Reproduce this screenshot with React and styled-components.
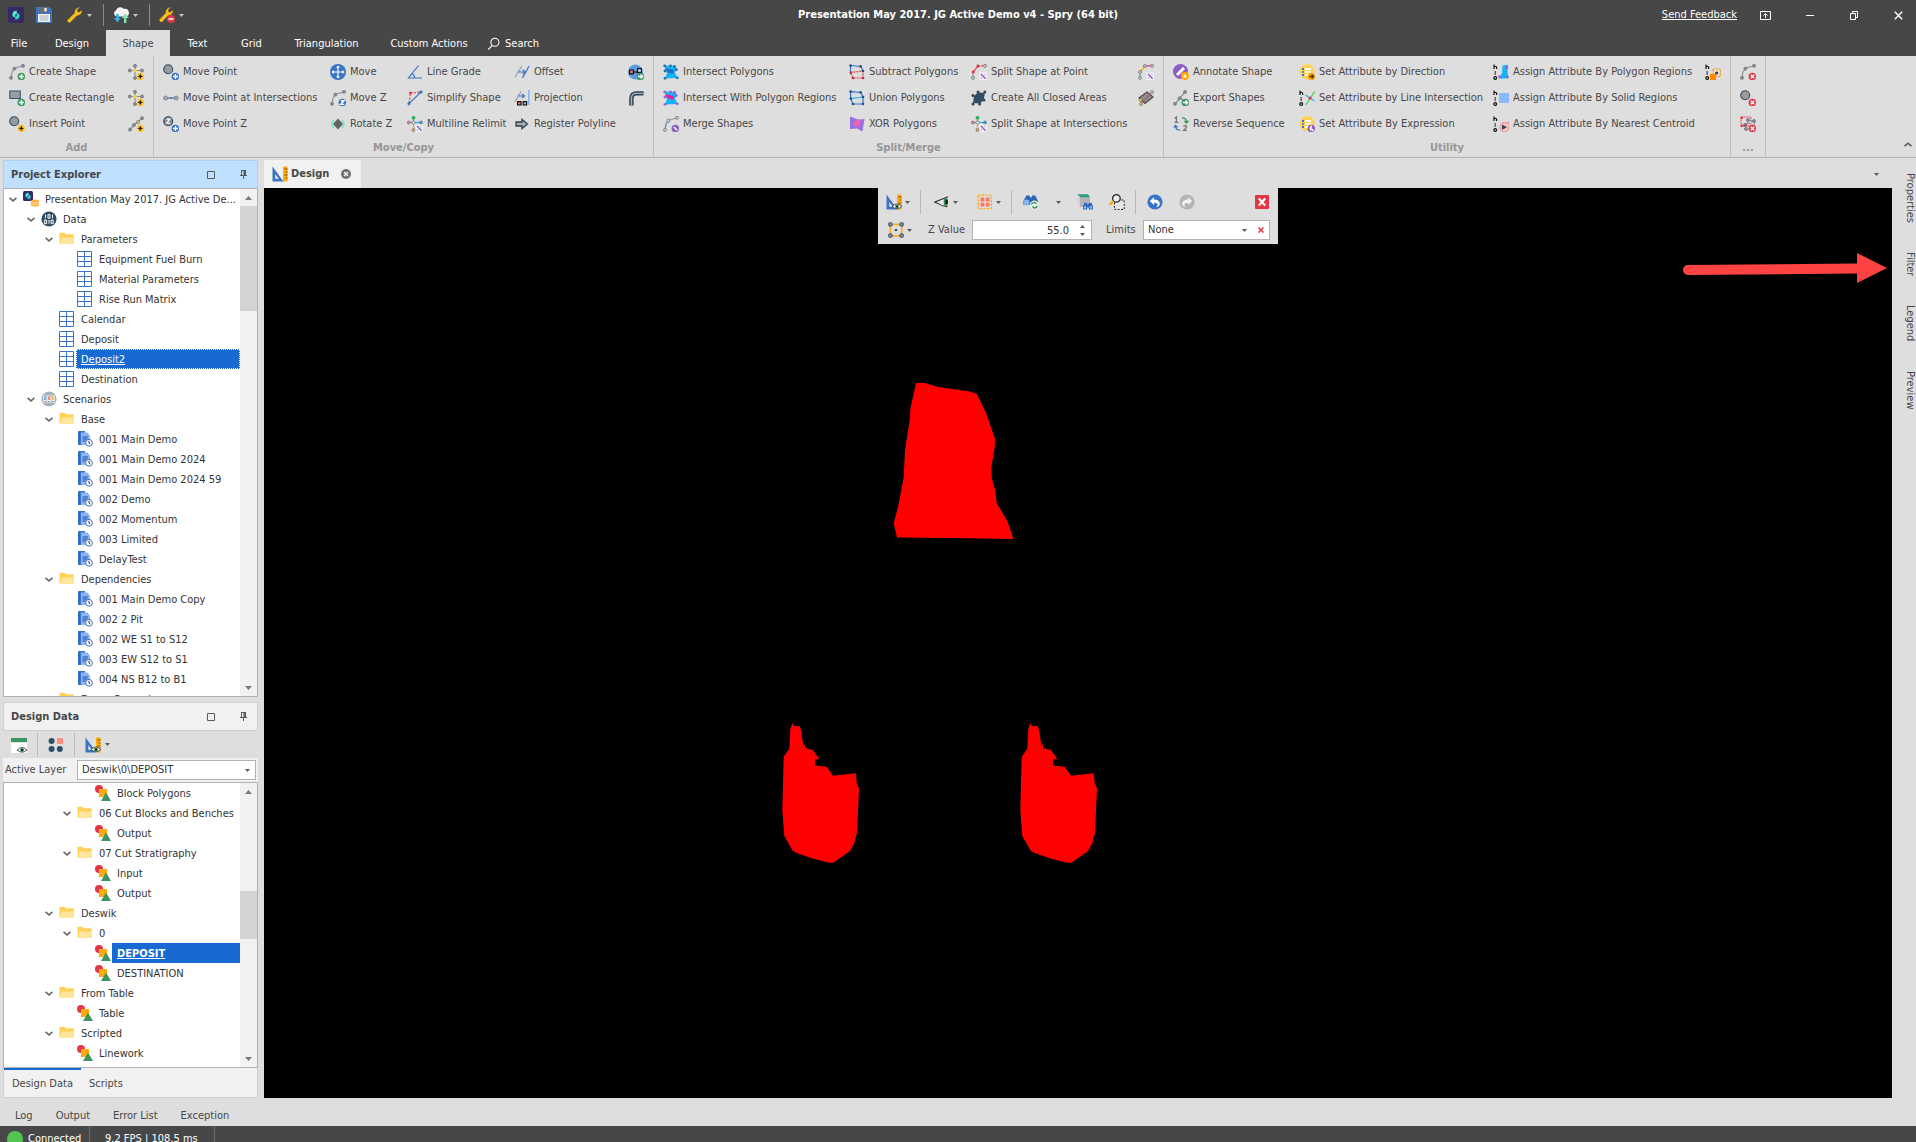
import React from "react";
import styled, { createGlobalStyle, css } from "styled-components";

const Global = createGlobalStyle`
  *, *::before, *::after { box-sizing: border-box; }
  html, body, #root { height: 100%; margin: 0; }
  body { overflow: hidden; background: #dedede; }
  body, button, input, select {
    font-family: "DejaVu Sans Condensed", "DejaVu Sans", "Noto Sans", sans-serif;
    font-size: 11px;
    line-height: 16px;
    color: #474747;
  }
  button { background: none; border: 0; padding: 0; margin: 0; text-align: left; white-space: nowrap; }
  ul { list-style: none; margin: 0; padding: 0; }
  svg { display: block; flex: none; }
`;

/* ---------- icon primitives (16 x 16 grid) ---------- */

const GREY = "#8f9396";
const NAVY = "#2f4f68";
const BLUE = "#3a74c4";
const GREEN = "#3c9560";
const RED = "#e23744";
const AMBER = "#ffaa0d";
const PURPLE = "#8c5cc0";

const Dot = ({ x, y, c = GREY, s = "#6c7379", r = 1.5 }) => (
  <circle cx={x} cy={y} r={r} fill={c} stroke={s} strokeWidth="0.8" />
);
const Line = ({ d, c = GREY, w = 1.2, ...rest }) => (
  <path d={d} fill="none" stroke={c} strokeWidth={w} {...rest} />
);
const MARKS = {
  plus: "M12.5 10v5M10 12.5h5",
  cross: "M10.8 10.8l3.4 3.4M14.2 10.8l-3.4 3.4",
  z: "M10.8 10.8h3.2l-3.2 3.6h3.4",
  right: "M10 12.5h4.5M12.6 10.6l2 1.9l-2 1.9",
  link: "M10.8 11l3.4 3.2",
  fx: "M13 10.4q-1.2-.4-1.2 1.4v3M10.6 12.2h2.2M13 13l1.4 2",
};
const Badge = ({ c = GREEN, mark = "plus", ink = "#fff" }) => (
  <>
    <circle cx="12.3" cy="12.4" r="3.7" fill={c} />
    <path d={MARKS[mark]} fill="none" stroke={ink} strokeWidth="1.4" />
  </>
);
const StarBadge = () => (
  <>
    <circle cx="12.3" cy="12.4" r="3.6" fill="#ffc52e" />
    <path d="M12.3 9.6l.8 2 2 .8-2 .8-.8 2-.8-2-2-.8 2-.8z" fill="#222" />
  </>
);
const Scissor = () => (
  <>
    <rect x="8.5" y="8.5" width="7.5" height="7.5" rx="1" fill="#f4f0f8" />
    <Line d="M10 10l4.6 4.8" c={PURPLE} w={1.4} />
    <Line d="M14 9.6v2M10.6 13v2" c="#c9b6de" />
  </>
);
const Polyline3 = ({ a = GREY, b = GREY, c = "#8f9396" }) => (
  <>
    <Line d="M2 14L3 8L6 4" c={a} />
    <Line d="M6 4L14 1.8" c={b} />
    <Dot x={2} y={13.8} c={c} />
    <Dot x={5.4} y={4.6} c={c} />
    <Dot x={14} y={1.8} c={c} />
  </>
);
const CrossNodes = () => (
  <>
    <Line d="M7 1.5V14.5M1.5 6.5H14.5" />
    <Dot x={7} y={1.8} />
    <Dot x={1.8} y={6.5} />
    <Dot x={14} y={6.5} />
    <Dot x={7} y={14} />
    <circle cx="7" cy="6.5" r="1.7" fill="#ffd23c" />
  </>
);
const ColourCross = () => (
  <>
    <Line d="M6.5 2V6.5" c="#22b14c" />
    <Line d="M6.5 6.5V14" c={AMBER} />
    <Line d="M1.5 6.5H6.5" c="#ff3fa4" />
    <Line d="M6.5 6.5H14.5" c="#29a9e0" />
    <Dot x={6.5} y={1.8} c="#22b14c" s="#22b14c" />
    <Dot x={1.8} y={6.5} c="#d78bb4" />
    <Dot x={14} y={6.5} c="#29a9e0" />
    <Dot x={6.5} y={14} c={AMBER} />
    <Dot x={6.5} y={6.5} c="#fff" />
    <Scissor />
  </>
);
const Attr = () => (
  <>
    <Line d="M1 .5v4.6M1 3q2-1.6 2.6.2v1.8" c="#111" w={1.2} />
    <Line d="M2.2 7v4" c="#555" w={1.3} />
    <circle cx="2.2" cy="14" r="1.4" fill="none" stroke="#111" strokeWidth="1.2" />
  </>
);
const ListDisc = () => (
  <>
    <circle cx="8" cy="7.5" r="7.5" fill="#ffd257" />
    <path d="M6 4h6v2H6zM6 7.2h6v1.6H6zM6 10h4v2H6z" fill="#fff" />
    <path d="M3 4h2v2H3zM3 7.2h2v1.6H3zM3 10h2v2H3z" fill={BLUE} />
  </>
);
const Blob = ({ c, inner }) => (
  <>
    <path d="M1.5 1.5L11 2L14 4.5L12 8.5L14.5 14L2 14.5L4 9Z" fill={c} />
    <path d="M2 4l4 1 5 1-1 4-6-2z" fill={inner} />
    {[[1.7, 1.8], [7.5, 1.8], [11.5, 2.4], [13.4, 5.6], [14.3, 13.8], [2, 14.3], [2, 7]].map(([x, y]) => (
      <circle key={`${x}${y}`} cx={x} cy={y} r="1.4" fill={inner === "#e81ca0" ? "#9a62d8" : "#1c6fa8"} />
    ))}
  </>
);
const SetSquare = () => (
  <>
    <path d="M.5 .5L11.5 15.5H.5zM3.2 8v4.8h3.6z" fill={BLUE} fillRule="evenodd" />
    <path d="M11 .5h4.5v15H11z" fill={AMBER} />
    <Line d="M12.5 3h3M13.5 6h2M12.5 9h3M13.5 12h2" c="#7a4a00" w={1} />
  </>
);
const Eye = ({ y = 12.5, x = 11.5 }) => (
  <>
    <path d={`M${x - 5} ${y}q5-5 10 0q-5 4.4-10 0z`} fill="#f2f2f2" stroke="#333" strokeWidth="0.8" />
    <circle cx={x} cy={y} r="2" fill={GREEN} />
    <circle cx={x} cy={y} r="1" fill="#111" />
  </>
);

const ICONS = {
  app: (
    <>
      <rect width="16" height="16" rx="2" fill="#342a66" />
      <path d="M8.6 3.4Q4.4 4 4.4 7.4q0 2.6 2.8 2.8V8.4q0-1.8 1.8-2z" fill="#52f0cf" />
      <path d="M7.4 12.8q4.2-.6 4.2-4 0-2.6-2.8-2.8v1.8q0 1.8-1.8 2z" fill="#2fd6c0" />
    </>
  ),
  save: (
    <>
      <path d="M0 0h13l3 2.6V16H0z" fill={BLUE} />
      <path d="M3 0h9v5.5H3z" fill="#6e6e6e" />
      <path d="M8.5 1h2v3.4h-2z" fill="#fff" />
      <path d="M2 7h12v8H2z" fill="#f3f3f3" />
      <Line d="M3.5 9h9M3.5 11h9M3.5 13h9" c="#9aa7b5" w={0.9} />
    </>
  ),
  wrench: <path d="M14.8 3.2L12 5.6 10.2 4.4 10.6 2 13 .6A4.6 4.6 0 0 0 7.8 6L1 12.6a1.7 1.7 0 0 0 2.6 2.4L10 8.4A4.4 4.4 0 0 0 14.8 3.2z" fill="#f5bd16" />,
  cloud: (
    <>
      <path d="M3.5 9.5A3.4 3.4 0 0 1 3 3.2 4.6 4.6 0 0 1 11 2a3.6 3.6 0 0 1 2 7.5z" fill="#f4f4f4" />
      <path d="M3.2 7h2.6v4h2L4.5 15.6 1 11h2.2z" fill="#2fb0ea" />
      <path d="M11 16V11H8.8L12.2 6.6 15.8 11h-2.4v5z" fill="#7fe0b0" />
    </>
  ),
  wrenchStop: (
    <>
      <path d="M13.8 3.2L11 5.6 9.2 4.4 9.6 2 12 .6A4.6 4.6 0 0 0 6.8 6L1 12a1.7 1.7 0 0 0 2.6 2.4L9 8.4A4.4 4.4 0 0 0 13.8 3.2z" fill="#f5bd16" />
      <circle cx="12" cy="12" r="4" fill={RED} />
      <path d="M9.6 11.2h4.8v1.6H9.6z" fill="#fff" />
    </>
  ),
  createShape: <><Polyline3 /><Badge /></>,
  createRect: <><rect x=".8" y="1" width="10.5" height="7.5" fill="#9b9ea0" stroke={NAVY} /><Badge /></>,
  insertPoint: <><circle cx="5.2" cy="5.2" r="4.5" fill="#9b9b9b" stroke={NAVY} strokeWidth="1.1" /><StarBadge /></>,
  crossStar: <><CrossNodes /><StarBadge /></>,
  diagStar: (
    <>
      <Line d="M2 13.5L7 8 14 2.5" />
      <Dot x={2} y={13.6} />
      <Dot x={6} y={9} />
      <Dot x={10} y={6} c="#ffd23c" />
      <Dot x={14} y={2.2} />
      <StarBadge />
    </>
  ),
  movePoint: <><circle cx="5.2" cy="5.2" r="4.5" fill="#9b9b9b" stroke={NAVY} strokeWidth="1.1" /><Badge c={BLUE} /></>,
  movePointZ: (
    <>
      <circle cx="5.2" cy="5.2" r="4.5" fill="#8d8d8d" stroke={NAVY} strokeWidth="1.1" />
      <Line d="M3.4 3.2h3.4L3.6 7.2h3.6" c="#fff" />
      <Badge c={BLUE} />
    </>
  ),
  moveInter: <><Line d="M2 8h12" c={BLUE} /><circle cx="2.6" cy="8" r="2" fill="#a6a6a6" stroke="#888" /><circle cx="13.2" cy="8" r="2" fill="#a6a6a6" stroke="#888" /><circle cx="8" cy="8" r="1" fill={BLUE} /></>,
  move: (
    <>
      <circle cx="8" cy="8" r="8" fill={BLUE} />
      <Line d="M8 2.5v11M2.5 8h11" c="#fff" w={1.2} />
      <path d="M8 1.4l2 2.4H6zM8 14.6l2-2.4H6zM1.4 8l2.4-2v4zM14.6 8l-2.4-2v4z" fill="#fff" />
    </>
  ),
  moveZ: <><Polyline3 /><Badge c={BLUE} mark="z" /></>,
  rotateZ: (
    <>
      <path d="M8 2.5L13 8l-5 5.5L3 8z" fill="#636363" />
      <Line d="M4 4q-4 4 0 8M12 4q4 4 0 8" c="#6fe3bd" w={1.4} />
    </>
  ),
  lineGrade: <><Line d="M11.5 1.5L1.5 14h13.5" c={BLUE} /><Line d="M5 10q3 1 2.4 4" c={BLUE} /></>,
  simplify: (
    <>
      <Line d="M2 13L3.5 3 14 2" c={RED} strokeDasharray="2 1.4" />
      <Line d="M2 13.6L14 2" c={BLUE} />
      <Dot x={2} y={13.8} c={BLUE} s={BLUE} r={1.2} />
      <Dot x={3.4} y={3} c={RED} s={RED} r={1.1} />
      <Dot x={14} y={2} c={BLUE} s={BLUE} r={1.2} />
    </>
  ),
  colourCross: <ColourCross />,
  offset: <><Line d="M1 13L8 2" c="#9aa0a5" /><Line d="M8.5 14L15 2" c={BLUE} /><Line d="M4 8h7M8.6 5.6L11.4 8l-2.8 2.4" c={BLUE} /></>,
  projection: (
    <>
      <Line d="M1 12L7 1.5" c="#9aa0a5" />
      <Line d="M4 6h6M8 4l2.4 2L8 8" c={BLUE} />
      <path d="M14 0h1.6v15H14z" fill="#8fb0e8" />
      <path d="M3 11h4.6v4.6H3zM8.6 11h4.6v4.6H8.6z" fill="#111" />
      <path d="M4.2 12.2h2.2v2.2H4.2z" fill="#ff7860" />
      <path d="M9.8 12.2H12v2.2H9.8z" fill="#8fb8ff" />
    </>
  ),
  register: <path d="M2 6h6V3.4L13.5 8 8 12.6V10H2z" fill="#a9adb0" stroke="#30424f" strokeWidth="1.3" />,
  copyCircle: (
    <>
      <circle cx="7.5" cy="8" r="7.5" fill="#5d9be0" />
      <path d="M1 5.4h5v5H1zM9 4h5v5H9z" fill="#111" />
      <path d="M2.2 6.6h2.6v2.6H2.2z" fill="#ff7860" />
      <path d="M10.2 5.2h2.6v2.6h-2.6z" fill="#dfe8f5" />
      <Line d="M5 8h5" c="#111" />
      <Badge mark="right" />
    </>
  ),
  pipe: <><Line d="M3.4 15.5V8.5Q3.4 3.4 8.5 3.4H15.5" c="#2f4455" w={4.4} /><Line d="M3.4 15V8.5Q3.4 3.4 8.5 3.4H15" c="#9fb3c2" w={1.4} /></>,
  intersect: <Blob c="#13b4f5" inner="#1c6fc4" />,
  intersectRegions: <Blob c="#13b4f5" inner="#e81ca0" />,
  merge: <><Polyline3 a="#5b86c9" b="#9aa0a5" c="#cfd3d6" /><Badge c={PURPLE} mark="link" /></>,
  subtract: (
    <>
      <Line d="M1.5 1.5L12 2.5 14 7" c={BLUE} />
      <Line d="M1.5 1.5V8" c={BLUE} />
      <Line d="M1.5 8.5L14 7V14H4z" c={RED} strokeDasharray="2 1" />
      {[[1.6, 1.6], [11.6, 2.4], [14, 7]].map(([x, y]) => <circle key={x} cx={x} cy={y} r="1.3" fill="#23508c" />)}
      {[[1.8, 8.6], [4, 14], [14, 14]].map(([x, y]) => <circle key={x} cx={x} cy={y} r="1.3" fill="#c22a48" />)}
    </>
  ),
  union: (
    <>
      <Line d="M1.6 1.6L12 2.5 14 7V14H4L1.6 8.6z" c={BLUE} />
      <Line d="M1.8 8.6L14 7" c="#29b4ee" />
      {[[1.6, 1.6], [11.6, 2.4], [14, 7], [1.8, 8.6], [4, 14], [14, 14]].map(([x, y]) => <circle key={`${x}${y}`} cx={x} cy={y} r="1.3" fill="#23508c" />)}
    </>
  ),
  xor: <><path d="M1 .5l8 3 6.5-.6-2 12.5L8 12.5l-7 .5z" fill="#9a72e0" /><path d="M5.5 5l6-1-1.5 7-4.5-1.5z" fill="#ff5fa8" /></>,
  splitPoint: (
    <>
      <Line d="M2 14V8" c="#9aa0a5" />
      <Line d="M2.2 8L7 2" c={RED} />
      <Line d="M7 1.8h7" c={RED} strokeDasharray="2 1" />
      <Dot x={2} y={13.8} c="#ccc" />
      <Dot x={2.2} y={8} c={RED} s={RED} r={1.2} />
      <Dot x={7} y={2} c={RED} s={RED} r={1.2} />
      <Dot x={14} y={1.8} c="#ccc" />
      <Scissor />
    </>
  ),
  closed: (
    <>
      <path d="M3 6l4-3.6 7 .4-1.4 7.4L9 13.4 2 13z" fill="#2f4f68" />
      {[[2, 5.6], [7, 2], [13.8, 2], [13, 10], [8.6, 14], [2, 14]].map(([x, y]) => <circle key={`${x}${y}`} cx={x} cy={y} r="1.5" fill="#2f4455" />)}
    </>
  ),
  splitColour: (
    <>
      <Line d="M2 14V8" c="#29a9e0" />
      <Line d="M2 8L7 2" c={AMBER} w={1.6} />
      <Line d="M7 1.8h7" c="#ff3fa4" w={1.6} />
      <Dot x={2} y={13.8} c="#ccc" />
      <Dot x={2.2} y={8} c="#ccc" />
      <Dot x={7} y={2} c="#ccc" />
      <Dot x={14} y={1.8} c="#ccc" />
      <Scissor />
    </>
  ),
  plate: (
    <>
      <path d="M1 8L9 2l6 5-8 6.5z" fill="#8e8e8e" stroke="#4a4a4a" strokeWidth="1.2" />
      <Line d="M3 14L14 2" c={RED} strokeDasharray="2 1" />
      <Dot x={3} y={14} c="#ffd23c" />
      <Dot x={14} y={2} c="#ccc" />
      <Dot x={2.6} y={10} c="#ffd23c" />
    </>
  ),
  annotate: (
    <>
      <circle cx="7.5" cy="7.5" r="7.5" fill={PURPLE} />
      <Line d="M4 11L11 4" c="#fff" w={3} />
      <circle cx="12" cy="12" r="4" fill={AMBER} />
      <path d="M12 10l2 3.4h-4z" fill="#fff" />
    </>
  ),
  exportShapes: (
    <>
      <Line d="M2 14L7 8 12 1.8" />
      <Line d="M7 8l5 3" />
      <Dot x={2} y={13.8} />
      <Dot x={6.6} y={8.2} />
      <Dot x={12} y={2} />
      <Badge mark="right" />
    </>
  ),
  reverse: (
    <>
      <Line d="M1.6 2.6L3.4 1v5.4M1.4 6.4h4" c="#777" w={1.3} />
      <Line d="M10.4 10.4q2.8-2 3 0 0 1.4-3 4h3.6" c="#777" w={1.3} />
      <Line d="M9 2q4-.6 4.6 4M11.4 5l2.2 2 1.8-2.4" c={GREEN} w={1.3} />
      <Line d="M7 14q-4 .4-4.6-4M.8 11.6L2.4 9.4l2.2 1.8" c={BLUE} w={1.3} />
    </>
  ),
  setDirection: <><ListDisc /><Badge c={AMBER} mark="right" ink="#5a3a00" /></>,
  setLine: (
    <>
      <Attr />
      <Line d="M6.5 5L15.5 11" c="#29b4ee" w={1.4} />
      <Line d="M15.5 1.5L7 15" c="#4fd04a" w={1.4} />
      <circle cx="11" cy="8" r="1.6" fill={RED} />
    </>
  ),
  setExpression: <><ListDisc /><Badge c={PURPLE} mark="fx" /></>,
  assignPolygon: (
    <>
      <Attr />
      <path d="M9.4 1.4l5.6-.6-.6 6 1 7.4-9.6.6 3.4-6z" fill="#13b4f5" />
      {[[14, 3.6], [6.4, 12.6], [14.6, 13]].map(([x, y]) => <circle key={x} cx={x} cy={y} r="1.3" fill="#b44fd0" />)}
    </>
  ),
  assignSolid: <><Attr /><path d="M6 3h10v10H6z" fill="#8bb9ff" /></>,
  assignCentroid: (
    <>
      <Attr />
      <path d="M11.4 6.6H16V11a4.6 4.6 0 1 1-4.6-4.4z" fill="#f6c4c4" stroke="#f08a8a" />
      <path d="M9 8.6l5 2.6-5 2.6z" fill="#2f4455" />
    </>
  ),
  assignBox: (
    <>
      <Attr />
      <path d="M5 10h6v6H5z" fill="#ff8a00" />
      <rect x="8" y="5" width="7.4" height="7.4" fill="none" stroke="#ff8a00" strokeDasharray="2 1" />
      <circle cx="11.6" cy="9" r="1.6" fill="#2f4455" />
    </>
  ),
  delShape: <><Polyline3 /><Badge c={RED} mark="cross" /></>,
  delPoint: <><circle cx="5.2" cy="5.2" r="4.5" fill="#9b9b9b" stroke={NAVY} strokeWidth="1.1" /><Badge c={RED} mark="cross" /></>,
  delMany: (
    <>
      <rect x="1" y="1" width="10" height="9" fill="none" stroke={RED} strokeDasharray="1.6 1" />
      <Line d="M6 13L8 4l6 1v5M4 9l6-2" />
      <Dot x={1.8} y={1.8} c={RED} s={RED} r={1} />
      <Dot x={1.8} y={9.8} c={RED} s={RED} r={1} />
      <Dot x={8} y={4} />
      <Dot x={14} y={5} />
      <Dot x={5} y={9} c={RED} />
      <Dot x={6} y={13} />
      <Badge c={RED} mark="cross" />
    </>
  ),
  project: (
    <>
      <rect width="10" height="10" rx="1.5" fill="#342a66" />
      <path d="M5.6 1.8Q2.4 2 2.4 4.6q0 1.8 2 2V5.4q0-1.2 1.2-1.4z" fill="#52f0cf" />
      <path d="M4.6 8.2q3.2-.2 3.2-2.8 0-1.8-2-2v1.2q0 1.2-1.2 1.4z" fill="#2fd6c0" />
      <path d="M8 9.4q4-1.8 8 0v5.4q-4 1.8-8 0z" fill="#ffb13d" />
      <Line d="M8 11.4q4 1.4 8 0M8 13.4q4 1.4 8 0" c="#ffe0a8" w={0.8} />
    </>
  ),
  data: (
    <>
      <circle cx="8" cy="8" r="7.6" fill={NAVY} />
      <Line d="M4.5 3.6v3.6M7 3.6h2v3.6H7zM11.5 3.6v3.6M3.6 9h2v3.6h-2zM8 9v3.6M10.2 9h2v3.6h-2z" c="#fff" w={1} />
    </>
  ),
  scenarios: (
    <>
      <circle cx="8" cy="8" r="7.6" fill="#a9b3bb" />
      <path d="M2.4 4.6h3v7.2h-3zM6.4 4.6h3.2v7.2H6.4zM10.6 4.6h3v7.2h-3z" fill="#fff" />
      <Line d="M4 5v4" c="#29a9e0" w={1.4} />
      <Line d="M8 5v4" c="#f0603a" w={1.4} />
      <Line d="M12 5v4" c={AMBER} w={1.4} />
      <Line d="M4 10v1.2M8 10v1.2M12 10v1.2" c="#555" w={1.2} />
    </>
  ),
  folder: <><path d="M.5 2.5q0-.8.8-.8h4.2l1.4 1.6h7q.8 0 .8.8v8.4H.5z" fill="#ffd257" /><path d="M3 6.4h12.4L14.4 13H.8z" fill="#ffe69c" /></>,
  table: <><path d="M.5 .5h14v15H.5z" fill="#fff" /><Line d="M.5 .5h14v15H.5zM.5 5.5h14M.5 10.5h14M7.5 .5v15" c={BLUE} w={1} /></>,
  scenario: (
    <>
      <path d="M1 0h7v14H1z" fill={BLUE} />
      <path d="M4 1.6h6.4l2.6 3V14H4z" fill="#8bb4f8" />
      <Line d="M5.5 6h5.4M5.5 8h5M5.5 10h3" c="#1c4ca0" w={1} />
      <circle cx="12" cy="11.8" r="3.4" fill="#fff" stroke={BLUE} strokeWidth="1" />
      <Line d="M12 9.8v2.2l1.2 1" c="#333" w={1} />
      <Line d="M2.5 2v10" c="#244f96" w={0.8} strokeDasharray="1 1" />
    </>
  ),
  shapes: <><circle cx="4" cy="4" r="4" fill={RED} /><path d="M4 4h8v8H4z" fill={AMBER} /><path d="M11 7.6l5 8.4H6z" fill={GREEN} /></>,
  setSquare: <SetSquare />,
  setSquareEye: <><SetSquare /><Eye x={11} /></>,
  tableEye: <><path d="M0 1h16v4.4H0z" fill={GREEN} /><path d="M0 5.4h16V16H0z" fill="#fff" /><Eye x={11} y={13} /></>,
  dots: <><circle cx="3.6" cy="4" r="3" fill={NAVY} /><path d="M9 1h6v6H9z" fill="#ff9080" /><circle cx="3.6" cy="12" r="3" fill={NAVY} /><circle cx="11.8" cy="12" r="3" fill={NAVY} /></>,
  eye: <><path d="M2 8L13.4 3v9.6Q7.4 12 4.4 9.6z" fill="#e9e9e9" /><Line d="M14 2.8L.6 8.2l4 1.6" c="#333" w={1.1} /><Line d="M13.6 12.8Q7.6 12.2 4 9.4" c="#333" w={1} /><ellipse cx="11.8" cy="8" rx="2.2" ry="4" fill="#2f8a56" /><ellipse cx="12.6" cy="8" rx="1.2" ry="2.4" fill="#111" /></>,
  grid: <><rect x="1.2" y="1.2" width="13.2" height="13.4" fill="none" stroke={AMBER} strokeWidth="1.3" strokeDasharray="2.4 1.2" /><path d="M3.6 3.6h3.8v3.8H3.6zM8.8 3.6h3.8v3.8H8.8zM3.6 8.8h3.8v3.8H3.6zM8.8 8.8h3.8v3.8H8.8z" fill="#ff7860" /></>,
  binoc: (
    <>
      <path d="M3.4 1.6h3l.8 2h1.2l.8-2h3L15 7v4H.4V7z" fill="#2c65b5" />
      <circle cx="3.6" cy="8.6" r="3" fill="#8bb4f0" />
      <circle cx="11.4" cy="11.2" r="4.6" fill="#e8f3ea" />
      <Line d="M8.4 10.6q.8-2.4 3.2-2.2l1.8 1.4M14.4 11.8q-.8 2.4-3.2 2.2l-1.8-1.4" c={GREEN} w={1.4} />
    </>
  ),
  cube: (
    <>
      <path d="M3 3h10v10H3z" fill="#b4b4b4" />
      <path d="M.5 .2H11l2.2 3H3z" fill="#2f9a82" />
      <path d="M.5 .4L3 3.2V13L.5 10z" fill="#d2d2d2" />
      <path d="M7.4 8.8h2l1 1.4h1l1-1.4h2L16 12.4v3h-4.2v-1.8h-1.6v1.8H6v-3z" fill="#2f68c0" />
      <circle cx="8" cy="13.4" r="1.3" fill="#8bb4f0" />
      <circle cx="14" cy="13.4" r="1.3" fill="#8bb4f0" />
    </>
  ),
  lasso: (
    <>
      <rect x="5.4" y="6" width="9.8" height="9.4" fill="#e8e8e8" stroke="#222" strokeDasharray="2 1.4" />
      <circle cx="7.4" cy="4.4" r="3.8" fill="#ededed" stroke="#222" strokeWidth="1.3" />
      <Line d="M4.4 7L.6 11" c={AMBER} w={2.2} />
    </>
  ),
  undo: <><circle cx="8" cy="8" r="7.6" fill={BLUE} /><path d="M2.8 7L7 3.2v2.2q5.8.2 5.8 4.4 0 2.6-3.8 3.4 1.8-1 1.6-2.6Q10.4 8.8 7 8.8V11z" fill="#fff" /></>,
  redo: <><circle cx="8" cy="8" r="7.6" fill="#b4b4b4" /><path d="M13.2 7L9 3.2v2.2Q3.2 5.6 3.2 9.8q0 2.6 3.8 3.4-1.8-1-1.6-2.6Q5.6 8.8 9 8.8V11z" fill="#f4f4f4" /></>,
  closeRed: <><rect x="1" y="1" width="14" height="14" rx="1" fill={RED} /><Line d="M4.8 4.6l6.4 6.8M11.2 4.6l-6.4 6.8" c="#fff" w={2.2} /></>,
  nodes: (
    <>
      <rect x="2.4" y="2.4" width="11.4" height="11.4" fill="none" stroke={AMBER} strokeWidth="1.6" />
      {[[2.4, 2.4], [13.6, 2.4], [2.4, 13.6], [13.6, 13.6]].map(([x, y]) => <Dot key={`${x}${y}`} x={x} y={y} r={2} c="#7b8790" s={NAVY} />)}
      <circle cx="8" cy="8" r="1.3" fill={NAVY} />
    </>
  ),
  search: <><circle cx="9" cy="6" r="4.6" fill="none" stroke="#fff" strokeWidth="1.2" /><Line d="M6 9.6L1.4 14.4" c="#fff" w={1.4} /></>,
};

const Icon = ({ name, size = 16 }) => (
  <svg width={size} height={size} viewBox="0 0 16 16" aria-hidden="true">{ICONS[name]}</svg>
);
const Caret = ({ color = "#5a5a5a", up = false, w = 5 }) => (
  <svg width={w} height={(w + 1) / 2} viewBox="0 0 7 4" aria-hidden="true">
    <path d={up ? "M0 4h7L3.5 0z" : "M0 0h7L3.5 4z"} fill={color} />
  </svg>
);

/* ---------- layout ---------- */

const Shell = styled.div`
  display: flex;
  flex-direction: column;
  height: 100vh;
  background: #dedede;
`;
const TitleBar = styled.header`
  display: grid;
  grid-template-columns: 1fr auto 1fr;
  align-items: center;
  height: 30px;
  background: #474747;
  color: #fff;
`;
const QuickAccess = styled.div`
  display: flex;
  align-items: center;
  padding-left: 8px;
`;
const QuickButton = styled.button`
  display: flex;
  align-items: center;
  gap: 4px;
  margin-right: ${(p) => p.$after || 0}px;
`;
const QuickRule = styled.span`
  width: 1px;
  height: 22px;
  background: #8a8a8a;
  margin-right: 9px;
`;
const Title = styled.h1`
  margin: 0;
  font-size: 11px;
  font-weight: bold;
`;
const WindowTools = styled.div`
  display: flex;
  align-items: center;
  justify-content: flex-end;
  padding-right: 13px;
  gap: 35px;
`;
const Feedback = styled.a`
  color: #fff;
  margin-right: -12px;
`;

const Tabs = styled.nav`
  display: flex;
  height: 26px;
  background: #474747;
`;
const Tab = styled.button`
  width: ${(p) => p.$w}px;
  padding-top: 2px;
  text-align: center;
  color: ${(p) => (p.$on ? "#474747" : "#fff")};
  background: ${(p) => (p.$on ? "#dedede" : "transparent")};
`;
const SearchTab = styled.button`
  display: flex;
  align-items: center;
  gap: 4px;
  padding: 2px 0 0 4px;
  color: #fff;
`;

const Ribbon = styled.section`
  display: flex;
  flex: none;
  height: 102px;
  border-bottom: 1px solid #b2b2b2;
`;
const Group = styled.div`
  display: flex;
  flex-direction: column;
  padding-top: 3px;
  border-right: 1px solid #bfbfbf;
`;
const GroupBody = styled.div`
  display: grid;
  grid-auto-flow: column;
  grid-template-rows: repeat(3, 26px);
  grid-template-columns: ${(p) => p.$cols.map((c) => `${c}px`).join(" ")};
  padding-left: 9px;
`;
const GroupName = styled.div`
  text-align: center;
  font-weight: bold;
  color: #969696;
  padding-top: 3px;
`;
const Command = styled.button`
  grid-column: ${(p) => p.$col};
  grid-row: ${(p) => p.$row};
  display: flex;
  align-items: center;
  gap: 4px;
`;
const RibbonEnd = styled.div`
  flex: 1;
  display: flex;
  align-items: flex-end;
  justify-content: flex-end;
  padding: 0 4px 10px 0;
`;

const Work = styled.div`
  flex: 1;
  min-height: 0;
  display: flex;
  padding-top: 2px;
`;
const Side = styled.aside`
  width: 255px;
  flex: none;
  margin: 0 6px 0 3px;
  display: flex;
  flex-direction: column;
`;
const Panel = styled.section`
  display: flex;
  flex-direction: column;
  min-height: 0;
  flex: ${(p) => p.$grow} 1 0;
  margin-bottom: ${(p) => p.$after || 0}px;
`;
const PanelHead = styled.header`
  flex: none;
  display: flex;
  align-items: center;
  height: 28px;
  padding: 0 10px 0 7px;
  gap: 25px;
  background: ${(p) => (p.$active ? "#bfe0ff" : "#f1f1f1")};
  border: 1px solid ${(p) => (p.$active ? "#b4cfe8" : "#d2d2d2")};
  border-bottom: 0;
`;
const PanelTitle = styled.h2`
  flex: 1;
  margin: 0;
  font-size: 11px;
  font-weight: bold;
`;
const TreeBox = styled.div`
  flex: 1;
  min-height: 0;
  display: flex;
  background: #fff;
  border: 1px solid #b2b2b2;
`;
const TreeList = styled.ul`
  flex: 1;
  min-width: 0;
  overflow: hidden;
`;
const Row = styled.li`
  display: flex;
  align-items: center;
  height: 20px;
  padding-left: ${(p) => 2 + p.$level * 18}px;
`;
const Expander = styled.button`
  width: 14px;
  height: 20px;
  flex: none;
  display: grid;
  place-items: center;
`;
const RowIcon = styled.span`
  width: 20px;
  flex: none;
  padding-left: 3px;
`;
const RowText = styled.span`
  flex: 1;
  height: 20px;
  line-height: 20px;
  padding-left: 4px;
  border: 1px solid transparent;
  white-space: nowrap;
  color: #333;
  ${(p) =>
    p.$selected &&
    css`
      color: #fff;
      background: #186ad2;
      border: 1px ${p.$focus ? "dotted #fff" : "solid #186ad2"};
      text-decoration: underline;
      font-weight: ${p.$strong ? "bold" : "normal"};
    `}
`;
const ScrollTrack = styled.div`
  width: 17px;
  flex: none;
  display: flex;
  flex-direction: column;
  align-items: stretch;
  background: #f1f1f1;
`;
const ScrollArrow = styled.button`
  height: 17px;
  flex: none;
  display: grid;
  place-items: center;
`;
const ScrollSpace = styled.div`
  flex: ${(p) => p.$part} 1 0;
  background: ${(p) => (p.$thumb ? "#d3d3d3" : "transparent")};
`;

const DataTools = styled.div`
  flex: none;
  display: flex;
  align-items: center;
  height: 28px;
  padding-left: 8px;
  border-top: 1px solid #cfcfcf;
`;
const ToolRule = styled.span`
  width: 1px;
  height: 24px;
  margin: 0 10px;
  background: #bdbdbd;
`;
const ToolButton = styled.button`
  display: flex;
  align-items: center;
  gap: 4px;
`;
const LayerRow = styled.div`
  flex: none;
  display: flex;
  align-items: center;
  justify-content: space-between;
  height: 24px;
  padding: 0 2px;
  background: #f1f1f1;
`;
const SelectBox = styled.span`
  display: flex;
  align-items: center;
  height: 20px;
  width: ${(p) => p.$w}px;
  background: #fff;
  border: 1px solid #b2b2b2;
`;
const Select = styled.select`
  flex: 1;
  min-width: 0;
  height: 18px;
  appearance: none;
  border: 0;
  padding: 0 4px;
  background: transparent;
  color: #333;
`;
const SelectEnd = styled.span`
  display: flex;
  align-items: center;
  gap: 11px;
  padding-right: 5px;
`;
const PanelTabs = styled.nav`
  flex: none;
  display: flex;
  height: 30px;
  background: #f1f1f1;
  border: 1px solid #d2d2d2;
  border-top: 0;
`;
const PanelTab = styled.button`
  padding: 0 8px;
  border-top: 2px solid ${(p) => (p.$on ? "#186ad2" : "transparent")};
`;

const Centre = styled.main`
  flex: 1;
  min-width: 0;
  display: flex;
  flex-direction: column;
`;
const DocTabs = styled.div`
  flex: none;
  display: flex;
  align-items: stretch;
  justify-content: space-between;
  height: 28px;
`;
const DocTab = styled.div`
  display: flex;
  align-items: center;
  width: 97px;
  padding-left: 8px;
  gap: 3px;
  background: #f1f1f1;
  font-weight: bold;
`;
const DocClose = styled.button`
  margin-left: 9px;
`;
const DocMore = styled.button`
  width: 32px;
  display: grid;
  place-items: center;
`;
const Viewport = styled.div`
  position: relative;
  flex: 1;
  min-height: 0;
  background: #000;
  & > svg { width: 100%; height: 100%; }
`;
const Floating = styled.div`
  position: absolute;
  top: 0;
  left: 50%;
  margin-left: -200px;
  width: 400px;
  height: 56px;
  background: #dedede;
`;
const FloatRow = styled.div`
  display: flex;
  align-items: center;
  height: 28px;
  padding: 0 8px;
`;
const FloatButton = styled.button`
  display: flex;
  align-items: center;
  gap: ${(p) => p.$gap || 3}px;
  margin-left: ${(p) => p.$before || 0}px;
`;
const FloatRule = styled.span`
  width: 1px;
  height: 24px;
  margin-left: 10px;
  background: #b9b9b9;
`;
const FieldLabel = styled.label`
  width: ${(p) => p.$w}px;
  margin-left: ${(p) => p.$before || 0}px;
`;
const NumberBox = styled.span`
  display: flex;
  align-items: center;
  width: 120px;
  height: 20px;
  padding-right: 6px;
  background: #fff;
  border: 1px solid #b2b2b2;
`;
const NumberInput = styled.input`
  flex: 1;
  min-width: 0;
  height: 18px;
  border: 0;
  padding: 0 11px 0 4px;
  text-align: right;
  background: transparent;
  color: #333;
`;
const Spinner = styled.span`
  display: grid;
  gap: 5px;
`;
const Spin = styled.button`
  line-height: 0;
`;
const Spacer = styled.span`
  flex: 1;
`;

const Strip = styled.nav`
  width: 24px;
  flex: none;
  display: flex;
  flex-direction: column;
  gap: 29px;
  padding: 13px 0 0 10px;
`;
const StripTab = styled.button`
  writing-mode: vertical-rl;
  width: 16px;
`;

const DockTabs = styled.nav`
  flex: none;
  display: flex;
  align-items: center;
  height: 28px;
  padding: 8px 0 0 15px;
  gap: 23px;
`;
const DockTab = styled.button`
  height: 20px;
`;
const Status = styled.footer`
  flex: none;
  height: 16px;
  overflow: hidden;
  display: flex;
  align-items: flex-start;
  background: #474747;
`;
const StatusCell = styled.div`
  display: flex;
  align-items: center;
  gap: 5px;
  height: 26px;
  width: ${(p) => p.$w}px;
  padding-left: ${(p) => p.$pad}px;
  border-right: 1px solid #6a6a6a;
  color: #fff;
`;
const Lamp = styled.span`
  width: 16px;
  height: 16px;
  border-radius: 50%;
  background: #52c452;
`;

/* ---------- data ---------- */

const TABS = [["File", 38], ["Design", 68], ["Shape", 64], ["Text", 55], ["Grid", 53], ["Triangulation", 97], ["Custom Actions", 108]];

const GROUPS = [
  {
    name: "Add",
    cols: [119, 25],
    items: [
      [["createShape", "Create Shape"], ["createRect", "Create Rectangle"], ["insertPoint", "Insert Point"]],
      [["crossStar", "", "Insert point at crossing"], ["crossStar", "", "Insert points at crossings"], ["diagStar", "", "Insert points along line"]],
    ],
  },
  {
    name: "Move/Copy",
    cols: [167, 77, 107, 114, 25],
    items: [
      [["movePoint", "Move Point"], ["moveInter", "Move Point at Intersections"], ["movePointZ", "Move Point Z"]],
      [["move", "Move"], ["moveZ", "Move Z"], ["rotateZ", "Rotate Z"]],
      [["lineGrade", "Line Grade"], ["simplify", "Simplify Shape"], ["colourCross", "Multiline Relimit"]],
      [["offset", "Offset"], ["projection", "Projection"], ["register", "Register Polyline"]],
      [["copyCircle", "", "Copy shapes"], ["pipe", "", "Fillet"]],
    ],
  },
  {
    name: "Split/Merge",
    cols: [186, 122, 167, 25],
    items: [
      [["intersect", "Intersect Polygons"], ["intersectRegions", "Intersect With Polygon Regions"], ["merge", "Merge Shapes"]],
      [["subtract", "Subtract Polygons"], ["union", "Union Polygons"], ["xor", "XOR Polygons"]],
      [["splitPoint", "Split Shape at Point"], ["closed", "Create All Closed Areas"], ["colourCross", "Split Shape at Intersections"]],
      [["splitColour", "", "Split by colour"], ["plate", "", "Split by plane"]],
    ],
  },
  {
    name: "Utility",
    cols: [126, 194, 212, 25],
    items: [
      [["annotate", "Annotate Shape"], ["exportShapes", "Export Shapes"], ["reverse", "Reverse Sequence"]],
      [["setDirection", "Set Attribute by Direction"], ["setLine", "Set Attribute by Line Intersection"], ["setExpression", "Set Attribute By Expression"]],
      [["assignPolygon", "Assign Attribute By Polygon Regions"], ["assignSolid", "Assign Attribute By Solid Regions"], ["assignCentroid", "Assign Attribute By Nearest Centroid"]],
      [["assignBox", "", "Assign attribute by box"]],
    ],
  },
  {
    name: "...",
    cols: [25],
    items: [[["delShape", "", "Delete shape"], ["delPoint", "", "Delete point"], ["delMany", "", "Delete selection"]]],
  },
];

const scenario = (label) => ({ level: 3, icon: "scenario", label });
const PROJECT = [
  { level: 0, icon: "project", label: "Presentation May 2017. JG Active De...", open: true },
  { level: 1, icon: "data", label: "Data", open: true },
  { level: 2, icon: "folder", label: "Parameters", open: true },
  { level: 3, icon: "table", label: "Equipment Fuel Burn" },
  { level: 3, icon: "table", label: "Material Parameters" },
  { level: 3, icon: "table", label: "Rise Run Matrix" },
  { level: 2, icon: "table", label: "Calendar" },
  { level: 2, icon: "table", label: "Deposit" },
  { level: 2, icon: "table", label: "Deposit2", selected: true, focus: true },
  { level: 2, icon: "table", label: "Destination" },
  { level: 1, icon: "scenarios", label: "Scenarios", open: true },
  { level: 2, icon: "folder", label: "Base", open: true },
  scenario("001 Main Demo"),
  scenario("001 Main Demo 2024"),
  scenario("001 Main Demo 2024 59"),
  scenario("002 Demo"),
  scenario("002 Momentum"),
  scenario("003 Limited"),
  scenario("DelayTest"),
  { level: 2, icon: "folder", label: "Dependencies", open: true },
  scenario("001 Main Demo Copy"),
  scenario("002 2 Pit"),
  scenario("002 WE S1 to S12"),
  scenario("003 EW S12 to S1"),
  scenario("004 NS B12 to B1"),
  { level: 2, icon: "folder", label: "Dump Scenarios" },
];
const LAYERS = [
  { level: 4, icon: "shapes", label: "Block Polygons" },
  { level: 3, icon: "folder", label: "06 Cut Blocks and Benches", open: true },
  { level: 4, icon: "shapes", label: "Output" },
  { level: 3, icon: "folder", label: "07 Cut Stratigraphy", open: true },
  { level: 4, icon: "shapes", label: "Input" },
  { level: 4, icon: "shapes", label: "Output" },
  { level: 2, icon: "folder", label: "Deswik", open: true },
  { level: 3, icon: "folder", label: "0", open: true },
  { level: 4, icon: "shapes", label: "DEPOSIT", selected: true, strong: true },
  { level: 4, icon: "shapes", label: "DESTINATION" },
  { level: 2, icon: "folder", label: "From Table", open: true },
  { level: 3, icon: "shapes", label: "Table" },
  { level: 2, icon: "folder", label: "Scripted", open: true },
  { level: 3, icon: "shapes", label: "Linework" },
];

const PIT = "M916 383H925L938 387 970 391.5 977 394 986 413 995 439 994.7 448 991.3 467 991.7 478 995.3 491 996.7 503 1007.3 521 1013.5 539 953 538 897 537.5 893.7 523 898 507 900 497 903.7 477 905 450 909.7 420 910.5 408z";
const DUMP = "M792.3 723.3L794 726H799.7L801.3 730.7 803.3 746 804.6 744 805.3 748 812.7 750 819.5 759.3H815V765.5L826.7 766.7 833 775.7 855.7 773.3 856.7 782.7 859 788.3 857 832.7 854.3 843.3 850 851 838.7 859 833.3 862.7H829L811.7 858.3 796.7 853 792.7 850.7 784.3 836 782.3 810 783.7 756.7 789.3 748.7 790.3 729.3z";

/* ---------- pieces ---------- */

const Tree = ({ rows, label, scroll }) => (
  <TreeBox>
    <TreeList role="tree" aria-label={label}>
      {rows.map((r, i) => (
        <Row key={i} $level={r.level} role="treeitem" aria-selected={!!r.selected}>
          {r.open ? (
            <Expander aria-label={`Collapse ${r.label}`}>
              <svg width="8" height="5" viewBox="0 0 8 5" aria-hidden="true">
                <path d="M.5 .8L4 3.8 7.5 .8" fill="none" stroke="#6a6a6a" strokeWidth="1.7" />
              </svg>
            </Expander>
          ) : (
            <Expander as="span" />
          )}
          <RowIcon><Icon name={r.icon} /></RowIcon>
          <RowText $selected={r.selected} $focus={r.focus} $strong={r.strong}>{r.label}</RowText>
        </Row>
      ))}
    </TreeList>
    <ScrollTrack>
      <ScrollArrow aria-label="Scroll up"><Caret up w={7} color="#7a7a7a" /></ScrollArrow>
      <ScrollSpace $part={scroll[0]} />
      <ScrollSpace $part={scroll[1]} $thumb />
      <ScrollSpace $part={scroll[2]} />
      <ScrollArrow aria-label="Scroll down"><Caret w={7} color="#7a7a7a" /></ScrollArrow>
    </ScrollTrack>
  </TreeBox>
);

const HeadButtons = () => (
  <>
    <button aria-label="Maximise panel">
      <svg width="8" height="8" viewBox="0 0 8 8"><path d="M.5 .5h7v7h-7z" fill="none" stroke="#5a5a5a" /></svg>
    </button>
    <button aria-label="Pin panel">
      <svg width="7" height="9" viewBox="0 0 7 9">
        <path d="M1 .5h5M1.5 .5v5M5.5 .5v5M0 5.5h7M3.5 5.5v3.5" fill="none" stroke="#5a5a5a" />
        <path d="M3.5 .5h2v5h-2z" fill="#5a5a5a" />
      </svg>
    </button>
  </>
);

export default function App() {
  return (
    <Shell>
      <Global />
      <TitleBar>
        <QuickAccess>
          <QuickButton $after={12} aria-label="Spry"><Icon name="app" /></QuickButton>
          <QuickButton $after={15} aria-label="Save"><Icon name="save" /></QuickButton>
          <QuickButton $after={11} aria-label="Tools"><Icon name="wrench" /><Caret color="#c9c9c9" /></QuickButton>
          <QuickRule />
          <QuickButton $after={11} aria-label="Sync"><Icon name="cloud" /><Caret color="#c9c9c9" /></QuickButton>
          <QuickRule />
          <QuickButton aria-label="Stop tools"><Icon name="wrenchStop" /><Caret color="#c9c9c9" /></QuickButton>
        </QuickAccess>
        <Title>Presentation May 2017. JG Active Demo v4 - Spry (64 bit)</Title>
        <WindowTools>
          <Feedback href="#feedback">Send Feedback</Feedback>
          <button aria-label="Ribbon display">
            <svg width="11" height="9" viewBox="0 0 11 9"><path d="M.5 .5h10v8H.5zM5.5 7V3M3.5 4.5l2-2 2 2" fill="none" stroke="#fff" /></svg>
          </button>
          <button aria-label="Minimise">
            <svg width="9" height="9" viewBox="0 0 9 9"><path d="M0 4.5h8" stroke="#fff" /></svg>
          </button>
          <button aria-label="Restore">
            <svg width="9" height="9" viewBox="0 0 9 9"><path d="M.5 2.5h5v6h-5zM2.5 2.5v-2h5v6h-2" fill="none" stroke="#fff" /></svg>
          </button>
          <button aria-label="Close">
            <svg width="9" height="9" viewBox="0 0 9 9"><path d="M.8 .8l7.4 7.4M8.2 .8L.8 8.2" stroke="#fff" strokeWidth="1.4" /></svg>
          </button>
        </WindowTools>
      </TitleBar>

      <Tabs>
        {TABS.map(([t, w]) => <Tab key={t} $w={w} $on={t === "Shape"}>{t}</Tab>)}
        <SearchTab><Icon name="search" size={14} />Search</SearchTab>
      </Tabs>

      <Ribbon>
        {GROUPS.map((g) => (
          <Group key={g.name}>
            <GroupBody $cols={g.cols}>
              {g.items.flatMap((col, c) =>
                col.map(([icon, text, hint], r) => (
                  <Command key={`${c}-${r}`} $col={c + 1} $row={r + 1} aria-label={hint}>
                    <Icon name={icon} />{text}
                  </Command>
                ))
              )}
            </GroupBody>
            <GroupName>{g.name}</GroupName>
          </Group>
        ))}
        <RibbonEnd>
          <button aria-label="Collapse ribbon">
            <svg width="8" height="5" viewBox="0 0 8 5"><path d="M.5 4.2L4 1.2l3.5 3" fill="none" stroke="#5a5a5a" strokeWidth="1.6" /></svg>
          </button>
        </RibbonEnd>
      </Ribbon>

      <Work>
        <Side>
          <Panel $grow={537} $after={5}>
            <PanelHead $active><PanelTitle>Project Explorer</PanelTitle><HeadButtons /></PanelHead>
            <Tree rows={PROJECT} label="Project Explorer" scroll={[0, 105, 369]} />
          </Panel>
          <Panel $grow={396}>
            <PanelHead><PanelTitle>Design Data</PanelTitle><HeadButtons /></PanelHead>
            <DataTools>
              <ToolButton aria-label="Show table"><Icon name="tableEye" /></ToolButton>
              <ToolRule />
              <ToolButton aria-label="Layer symbols"><Icon name="dots" /></ToolButton>
              <ToolRule />
              <ToolButton aria-label="Design view"><Icon name="setSquareEye" /><Caret /></ToolButton>
            </DataTools>
            <LayerRow>
              <label htmlFor="layer">Active Layer</label>
              <SelectBox $w={179}>
                <Select id="layer"><option>Deswik\0\DEPOSIT</option></Select>
                <SelectEnd><Caret /></SelectEnd>
              </SelectBox>
            </LayerRow>
            <Tree rows={LAYERS} label="Design Data" scroll={[92, 48, 112]} />
            <PanelTabs>
              <PanelTab $on>Design Data</PanelTab>
              <PanelTab>Scripts</PanelTab>
            </PanelTabs>
          </Panel>
        </Side>

        <Centre>
          <DocTabs>
            <DocTab>
              <Icon name="setSquare" />Design
              <DocClose aria-label="Close Design">
                <svg width="10" height="10" viewBox="0 0 10 10">
                  <circle cx="5" cy="5" r="5" fill="#6e6e6e" />
                  <path d="M3 3l4 4M7 3L3 7" stroke="#fff" strokeWidth="1.4" />
                </svg>
              </DocClose>
            </DocTab>
            <DocMore aria-label="Open documents"><Caret /></DocMore>
          </DocTabs>
          <Viewport>
            <svg viewBox="264 188 1628 910" role="img" aria-label="Design view">
              <path d={PIT} fill="#f00" />
              <path d={DUMP} fill="#f00" />
              <path d={DUMP} fill="#f00" transform="translate(238 0)" />
              <path d="M1688 265L1857 263.5V253L1887 268 1857 283V273.5L1688 275a5 5 0 0 1 0-10z" fill="#ff4343" />
            </svg>
            <Floating role="toolbar" aria-label="Design tools">
              <FloatRow>
                <FloatButton aria-label="Design view"><Icon name="setSquareEye" /><Caret /></FloatButton>
                <FloatRule />
                <FloatButton $before={13} aria-label="Visibility"><Icon name="eye" /><Caret /></FloatButton>
                <FloatButton $before={19} aria-label="Selection grid"><Icon name="grid" /><Caret /></FloatButton>
                <FloatRule />
                <FloatButton $before={11} $gap={17} aria-label="Find"><Icon name="binoc" /><Caret /></FloatButton>
                <FloatButton $before={16} aria-label="Find solid"><Icon name="cube" /></FloatButton>
                <FloatButton $before={16} aria-label="Zoom to selection"><Icon name="lasso" /></FloatButton>
                <FloatRule />
                <FloatButton $before={11} aria-label="Undo"><Icon name="undo" /></FloatButton>
                <FloatButton $before={16} aria-label="Redo"><Icon name="redo" /></FloatButton>
                <Spacer />
                <FloatButton aria-label="Close toolbar"><Icon name="closeRed" /></FloatButton>
              </FloatRow>
              <FloatRow>
                <FloatButton $before={2} aria-label="Snap mode"><Icon name="nodes" /><Caret /></FloatButton>
                <FieldLabel $w={44} $before={16} htmlFor="z">Z Value</FieldLabel>
                <NumberBox>
                  <NumberInput id="z" defaultValue="55.0" />
                  <Spinner>
                    <Spin aria-label="Increase"><svg width="5" height="3" viewBox="0 0 5 3"><path d="M0 3h5L2.5 0z" fill="#5a5a5a" /></svg></Spin>
                    <Spin aria-label="Decrease"><svg width="5" height="3" viewBox="0 0 5 3"><path d="M0 0h5L2.5 3z" fill="#5a5a5a" /></svg></Spin>
                  </Spinner>
                </NumberBox>
                <FieldLabel $w={37} $before={14} htmlFor="limits">Limits</FieldLabel>
                <SelectBox $w={127}>
                  <Select id="limits"><option>None</option></Select>
                  <SelectEnd>
                    <Caret />
                    <button aria-label="Clear limits">
                      <svg width="6" height="6" viewBox="0 0 6 6"><path d="M.5 .5l5 5M5.5 .5l-5 5" stroke={RED} strokeWidth="1.5" /></svg>
                    </button>
                  </SelectEnd>
                </SelectBox>
              </FloatRow>
            </Floating>
          </Viewport>
        </Centre>

        <Strip>
          {["Properties", "Filter", "Legend", "Preview"].map((t) => <StripTab key={t}>{t}</StripTab>)}
        </Strip>
      </Work>

      <DockTabs>
        {["Log", "Output", "Error List", "Exception"].map((t) => <DockTab key={t}>{t}</DockTab>)}
      </DockTabs>
      <Status>
        <StatusCell $w={90} $pad={7}><Lamp />Connected</StatusCell>
        <StatusCell $w={125} $pad={15}>9.2 FPS | 108.5 ms</StatusCell>
      </Status>
    </Shell>
  );
}
